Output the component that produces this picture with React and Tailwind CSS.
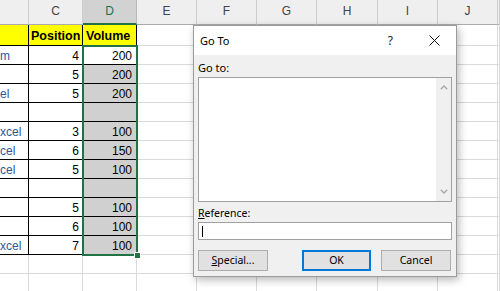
import React from 'react';

const cols = ['', 'C', 'D', 'E', 'F', 'G', 'H', 'I', 'J', ''];

const rows = [
  { b: '', c: 'Position', d: 'Volume', head: true },
  { b: 'm', c: '4', d: '200', active: true },
  { b: '', c: '5', d: '200' },
  { b: 'el', c: '5', d: '200' },
  { b: '', c: '', d: '' },
  { b: 'xcel', c: '3', d: '100' },
  { b: 'cel', c: '6', d: '150' },
  { b: 'cel', c: '5', d: '100' },
  { b: '', c: '', d: '' },
  { b: '', c: '5', d: '100' },
  { b: '', c: '6', d: '100' },
  { b: 'xcel', c: '7', d: '100' },
];

const emptyRows = 2;

const Chevron = ({ up }) => (
  <svg width="8" height="5" viewBox="0 0 8 5">
    <polyline
      points={up ? '0.8,4.2 4,1 7.2,4.2' : '0.8,0.8 4,4 7.2,0.8'}
      fill="none"
      stroke="#a6a6a6"
      strokeWidth="1.3"
    />
  </svg>
);

const Sheet = () => (
  <div className="grid grid-cols-[29px_54px_54px_60px_60px_60px_61px_60px_60px_1fr] grid-rows-[25px_21px_repeat(13,19px)] font-['Liberation_Sans',Arial,sans-serif] text-[12px] text-black">
    {/* Column headers */}
    {cols.map((c, i) =>
      i === 2 ? (
        <div key={i} className="flex items-end justify-center pb-[3px] bg-[#d2d2d2] border-r border-[#b8b8b8] border-b-2 border-b-[#217346] text-[#217346] text-[12px]">
          {c}
        </div>
      ) : (
        <div key={i} className="flex items-end justify-center pb-[4px] bg-[#efefef] border-r border-[#cdcdcd] border-b border-b-[#ababab] text-[#444] text-[12px]">
          {c}
        </div>
      )
    )}

    {/* Table rows */}
    {rows.map((r, ri) => (
      <React.Fragment key={ri}>
        {r.head ? (
          <>
            <div className="bg-[#ffff00] border-r border-b border-black" />
            <div className="flex items-center pl-[2px] pt-[2px] bg-[#ffff00] border-r border-b border-black font-bold text-[12.5px]">
              {r.c}
            </div>
            <div className="flex items-center pl-[3px] pt-[2px] bg-[#ffff00] border-r border-b border-black font-bold text-[12.5px]">
              {r.d}
            </div>
          </>
        ) : (
          <>
            <div className="flex items-center whitespace-nowrap pt-[2px] border-r border-b border-black text-[#2b579a]">
              {r.b}
            </div>
            <div className="flex items-center justify-end pr-[3px] pt-[2px] border-r border-b border-black">
              {r.c}
            </div>
            <div
              className={
                r.active
                  ? 'flex items-center justify-end pr-[4px] pt-[2px] border-r border-b border-black bg-white'
                  : 'flex items-center justify-end pr-[4px] pt-[2px] border-r border-b border-black bg-[#d0d0d0]'
              }
            >
              {r.d}
            </div>
          </>
        )}
        {[0, 1, 2, 3, 4, 5, 6].map((k) => (
          <div key={k} className="border-r border-b border-[#dadada]" />
        ))}
      </React.Fragment>
    ))}

    {/* Rows below the table */}
    {Array.from({ length: emptyRows }).map((_, ri) =>
      cols.map((_, k) => <div key={`${ri}-${k}`} className="border-r border-b border-[#dadada]" />)
    )}
  </div>
);

const GoToDialog = () => (
  <div className="absolute left-[193px] top-[25px] w-[264px] h-[252px] flex flex-col border border-[#9b9b9b] bg-[#f0f0f0] shadow-[2px_3px_8px_rgba(0,0,0,0.28)] font-['Noto_Sans','Open_Sans',sans-serif] text-black">
    {/* Title bar */}
    <div className="h-[29px] shrink-0 flex items-center bg-white pl-[6px]">
      <span className="text-[11px] leading-[14px]">Go To</span>
      <span className="ml-auto text-[12px] leading-[14px] text-[#222] mr-[36px]">?</span>
      <svg width="11" height="11" viewBox="0 0 11 11" className="mr-[16px]">
        <path d="M0.5 0.5 L10.5 10.5 M10.5 0.5 L0.5 10.5" stroke="#111" strokeWidth="1" />
      </svg>
    </div>

    {/* Body */}
    <div className="flex-1 flex flex-col pl-[4px] pr-[4px]">
      <div className="h-[22px] flex items-end pb-[2px]">
        <span className="text-[11px] leading-[14px]">Go to:</span>
      </div>

      <div className="h-[125px] flex border border-[#a0a0a0] bg-white">
        <div className="flex-1" />
        <div className="w-[15px] flex flex-col items-center justify-between bg-[#f0f0f0] py-[7px]">
          <Chevron up />
          <Chevron />
        </div>
      </div>

      <div className="h-[20px] flex items-end pb-[2px]">
        <span className="text-[10.5px] leading-[14px]">
          <span className="underline">R</span>eference:
        </span>
      </div>

      <div className="h-[18px] flex items-center border border-[#a0a0a0] bg-white pl-[3px]">
        <div className="w-px h-[11px] bg-black" />
      </div>

      <div className="h-[21px] mt-[10px] flex text-[10.5px]">
        <div className="w-[70px] flex items-center justify-center border border-[#adadad] bg-[#e1e1e1]">
          <span>
            <span className="underline">S</span>pecial...
          </span>
        </div>
        <div className="ml-auto w-[69px] flex items-center justify-center border-2 border-[#0078d7] bg-[#e1e1e1]">
          OK
        </div>
        <div className="ml-[10px] mr-[1px] w-[70px] flex items-center justify-center border border-[#adadad] bg-[#e1e1e1]">
          Cancel
        </div>
      </div>
    </div>
  </div>
);

export default function App() {
  return (
    <div className="relative w-[500px] h-[291px] overflow-hidden bg-white">
      <Sheet />

      {/* Selection outline D2:D12 */}
      <div className="absolute left-[82px] top-[45px] w-[56px] h-[211px] border-2 border-[#217346] pointer-events-none" />
      <div className="absolute left-[134px] top-[252px] w-[7px] h-[7px] bg-[#217346] border border-white" />

      <GoToDialog />
    </div>
  );
}
